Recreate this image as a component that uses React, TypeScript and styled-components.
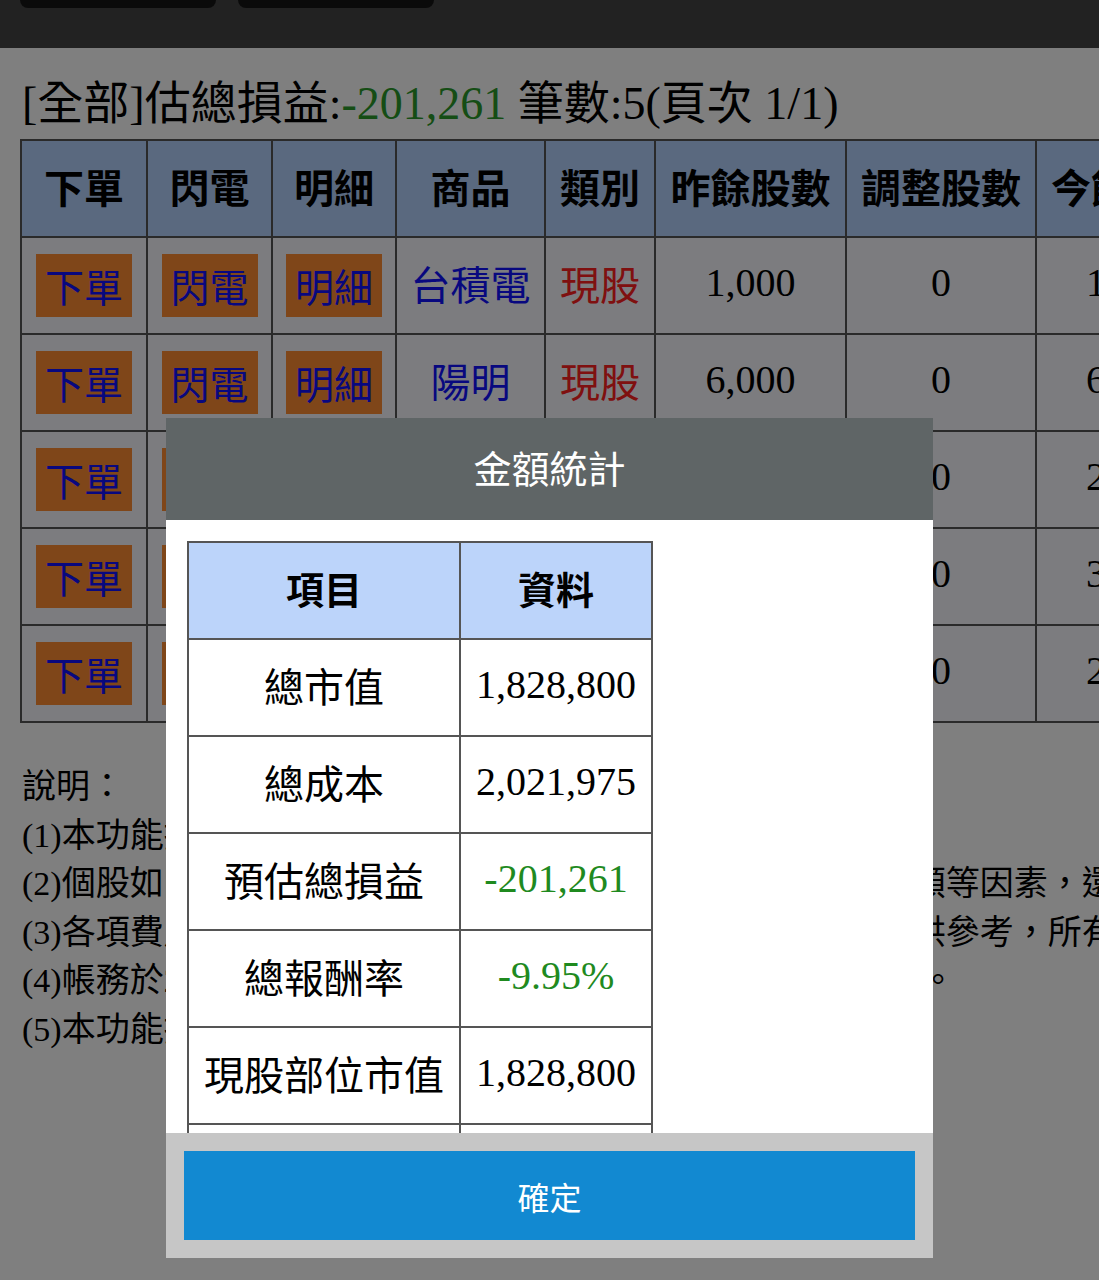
import React from "react";
import styled, { createGlobalStyle } from "styled-components";

const GlobalStyle = createGlobalStyle`
  html, body {
    margin: 0;
    padding: 0;
    height: 1280px;
    overflow: hidden;
    background: #fff;
    font-family: "Liberation Serif", "Noto Sans CJK TC", serif;
    color: #000;
  }
`;

const sans = `"Noto Sans CJK TC", "Noto Sans", sans-serif`;

const TopBar = styled.header`
  height: 48px;
  background: #444;
  display: flex;
  align-items: flex-start;
  gap: 22px;
  padding: 0 20px;
`;

const TopTab = styled.div`
  width: 196px;
  height: 8px;
  background: #151515;
  border-radius: 0 0 14px 14px;
`;

const Page = styled.main`
  padding: 30px 0 0 20px;
  overflow: hidden;
`;

const Title = styled.h1`
  margin: 0 0 9px 2px;
  font-size: 46px;
  font-weight: normal;
  line-height: 52px;
  white-space: nowrap;
`;

const Green = styled.span`
  color: #2a9a2a;
`;

const Grid = styled.table`
  border-collapse: collapse;
  table-layout: fixed;
  width: 1585px;
  border: 2px solid #555;
`;

const HeadCell = styled.th`
  height: 97px;
  box-sizing: border-box;
  background: #b4d2ff;
  border: 2px solid #555;
  font-family: ${sans};
  font-size: 40px;
  font-weight: bold;
  text-align: center;
  white-space: nowrap;
  overflow: hidden;
  padding: 0 0 6px;
`;

const Cell = styled.td<{ $tone?: "blue" | "red" }>`
  height: 97px;
  box-sizing: border-box;
  background: #f8f8ff;
  border: 2px solid #555;
  font-size: 40px;
  text-align: center;
  white-space: nowrap;
  overflow: hidden;
  padding: 0 0 6px;
  color: ${(p) => (p.$tone === "blue" ? "#1010ff" : p.$tone === "red" ? "#ff2020" : "#000")};
  font-family: ${(p) => (p.$tone ? sans : `"Liberation Serif", "Noto Sans CJK TC", serif`)};
`;

const ActionButton = styled.span`
  display: inline-flex;
  align-items: center;
  justify-content: center;
  width: 96px;
  height: 63px;
  margin-top: 6px;
  background: #ff8c32;
  color: #1010ff;
  font-family: ${sans};
  font-size: 39px;
  line-height: 1;
  vertical-align: middle;
`;

const Notes = styled.section`
  margin-top: 40px;
  margin-left: 2px;
  font-size: 34px;
  line-height: 48.5px;
  color: #000;
  white-space: nowrap;
`;

const NoteLine = styled.div``;

const Backdrop = styled.div`
  position: fixed;
  inset: 0;
  background: rgba(0, 0, 0, 0.5);
`;

const Dialog = styled.div`
  position: absolute;
  left: 166px;
  top: 418px;
  width: 767px;
  display: flex;
  flex-direction: column;
`;

const DialogHeader = styled.div`
  height: 102px;
  box-sizing: border-box;
  padding-bottom: 6px;
  background: #5f6566;
  color: #fff;
  display: flex;
  align-items: center;
  justify-content: center;
  font-family: ${sans};
  font-size: 38px;
`;

const DialogBody = styled.div`
  height: 592px;
  padding: 21px 0 0 21px;
  background: #fff;
  overflow: hidden;
`;

const StatTable = styled.table`
  border-collapse: collapse;
  table-layout: fixed;
  width: 464px;
  border: 2px solid #555;
`;

const StatHead = styled.th`
  height: 97px;
  box-sizing: border-box;
  background: #bcd4fa;
  border: 2px solid #555;
  font-family: ${sans};
  font-size: 38px;
  font-weight: bold;
  padding: 0 0 6px;
`;

const StatLabel = styled.td`
  height: 97px;
  box-sizing: border-box;
  border: 2px solid #555;
  font-family: ${sans};
  font-size: 40px;
  text-align: center;
  padding: 0 0 6px;
  white-space: nowrap;
`;

const StatValue = styled.td<{ $neg?: boolean }>`
  height: 97px;
  box-sizing: border-box;
  border: 2px solid #555;
  font-family: "Liberation Serif", serif;
  font-size: 40px;
  text-align: center;
  padding: 0 0 6px;
  white-space: nowrap;
  color: ${(p) => (p.$neg ? "#1f8a1f" : "#000")};
`;

const DialogFooter = styled.div`
  background: #c6c6c6;
  padding: 18px;
`;

const OkButton = styled.button`
  display: block;
  width: 100%;
  height: 89px;
  border: 0;
  background: #1289d1;
  color: #fff;
  font-family: ${sans};
  font-size: 32px;
  cursor: pointer;
`;

const columns = [
  { label: "下單", width: 126 },
  { label: "閃電", width: 125 },
  { label: "明細", width: 124 },
  { label: "商品", width: 149 },
  { label: "類別", width: 110 },
  { label: "昨餘股數", width: 191 },
  { label: "調整股數", width: 190 },
  { label: "今餘股數", width: 190 },
  { label: "成本均價", width: 190 },
  { label: "市值", width: 190 },
];

const holdings = [
  { name: "台積電", prev: "1,000", adj: "0", now: "1,000", cost: "512.0", value: "580,000" },
  { name: "陽明", prev: "6,000", adj: "0", now: "6,000", cost: "98.5", value: "393,600" },
  { name: "長榮", prev: "2,000", adj: "0", now: "2,000", cost: "160.2", value: "301,000" },
  { name: "萬海", prev: "3,000", adj: "0", now: "3,000", cost: "95.3", value: "225,600" },
  { name: "中鋼", prev: "2,000", adj: "0", now: "2,000", cost: "36.1", value: "64,200" },
];

const stats = [
  { label: "總市值", value: "1,828,800" },
  { label: "總成本", value: "2,021,975" },
  { label: "預估總損益", value: "-201,261", neg: true },
  { label: "總報酬率", value: "-9.95%", neg: true },
  { label: "現股部位市值", value: "1,828,800" },
  { label: "融資部位市值", value: "0" },
];

const notes = [
  "說明：",
  "(1)本功能提供庫存股票之損益試算。",
  "(2)個股如因除權、除息、現金增資、減資或其他影響成交金額等因素，還請自行調整。",
  "(3)各項費用及損益之計算皆以系統預設參數試算，其結果僅供參考，所有資料以對帳單為準。",
  "(4)帳務於22:00後更新為次一營業日資料，實際以對帳單為準。",
  "(5)本功能提供之資料以即時行情計算。",
];

export default function App() {
  return (
    <>
      <GlobalStyle />
      <TopBar>
        <TopTab />
        <TopTab />
      </TopBar>
      <Page>
        <Title>
          [全部]估總損益:<Green>-201,261</Green> 筆數:5(頁次 1/1)
        </Title>
        <Grid>
          <colgroup>
            {columns.map((c) => (
              <col key={c.label} style={{ width: c.width }} />
            ))}
          </colgroup>
          <thead>
            <tr>
              {columns.map((c) => (
                <HeadCell key={c.label}>{c.label}</HeadCell>
              ))}
            </tr>
          </thead>
          <tbody>
            {holdings.map((h) => (
              <tr key={h.name}>
                <Cell>
                  <ActionButton>下單</ActionButton>
                </Cell>
                <Cell>
                  <ActionButton>閃電</ActionButton>
                </Cell>
                <Cell>
                  <ActionButton>明細</ActionButton>
                </Cell>
                <Cell $tone="blue">{h.name}</Cell>
                <Cell $tone="red">現股</Cell>
                <Cell>{h.prev}</Cell>
                <Cell>{h.adj}</Cell>
                <Cell>{h.now}</Cell>
                <Cell>{h.cost}</Cell>
                <Cell>{h.value}</Cell>
              </tr>
            ))}
          </tbody>
        </Grid>
        <Notes>
          {notes.map((n) => (
            <NoteLine key={n}>{n}</NoteLine>
          ))}
        </Notes>
      </Page>
      <Backdrop>
        <Dialog>
          <DialogHeader>金額統計</DialogHeader>
          <DialogBody>
            <StatTable>
              <colgroup>
                <col style={{ width: 272 }} />
                <col style={{ width: 192 }} />
              </colgroup>
              <thead>
                <tr>
                  <StatHead>項目</StatHead>
                  <StatHead>資料</StatHead>
                </tr>
              </thead>
              <tbody>
                {stats.map((s) => (
                  <tr key={s.label}>
                    <StatLabel>{s.label}</StatLabel>
                    <StatValue $neg={s.neg}>{s.value}</StatValue>
                  </tr>
                ))}
              </tbody>
            </StatTable>
          </DialogBody>
          <DialogFooter>
            <OkButton>確定</OkButton>
          </DialogFooter>
        </Dialog>
      </Backdrop>
    </>
  );
}
